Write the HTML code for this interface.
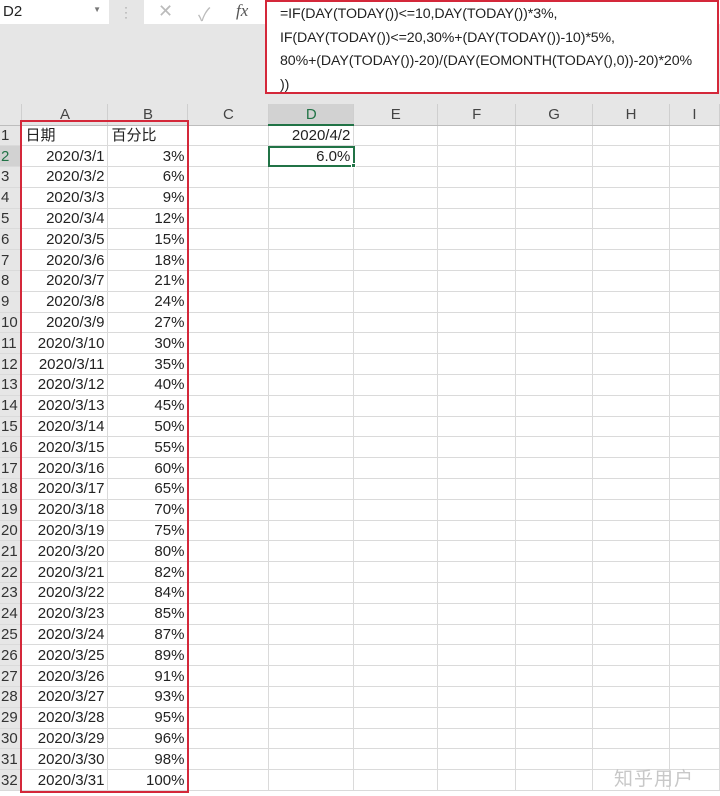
<!DOCTYPE html>
<html><head><meta charset="utf-8"><style>
*{margin:0;padding:0;box-sizing:border-box}
body{width:720px;height:796px;overflow:hidden;background:#fff;font-family:"Liberation Sans","Noto Sans CJK SC",sans-serif;color:#222;position:relative}
.top{position:absolute;left:0;top:0;width:720px;height:104px;background:#e6e6e6}
.nb{position:absolute;left:0;top:0;width:109px;height:24px;background:#fff;font-size:15px;padding:3px 0 0 3px}
.nb span{position:absolute;right:8px;top:5px;font-size:8px;color:#777}
.dots{position:absolute;left:124px;top:5px;color:#999;font-size:12px;line-height:5px}
.fbar{position:absolute;left:144px;top:0;width:576px;height:24px;background:#fff}
.ic{position:absolute;top:1px;font-size:18px;color:#bbb}
.fx{position:absolute;left:92px;top:1px;font-size:17px;font-style:italic;font-family:"Liberation Serif",serif;color:#555}
.fbox{position:absolute;left:265px;top:0;width:454px;height:94px;background:#fff;border:2px solid #d4283a;font-size:14.2px;line-height:23.5px;padding:1px 0 0 13px;color:#222;white-space:nowrap;overflow:hidden;letter-spacing:-0.1px}
table{position:absolute;left:0;top:104px;border-collapse:collapse;table-layout:fixed}
td{height:20.8px;border-right:1px solid #dadada;border-bottom:1px solid #dadada;font-size:15px;padding:0 3px;white-space:nowrap;overflow:hidden;line-height:19px}
tr.h td{height:21px;background:#e6e6e6;text-align:center;color:#444;border-right:1px solid #cfcfcf;border-bottom:1px solid #bdbdbd}
td.r{background:#e6e6e6;text-align:left;padding:0 0 0 1px;color:#333;border-right:1px solid #bdbdbd}
td.a,td.b{text-align:right}
.red{position:absolute;left:20px;top:120px;width:169px;height:673px;border:2px solid #d4283a}
.sel{position:absolute;left:268px;top:146px;width:87px;height:21px;border:2px solid #217346}
.wm{position:absolute;left:614px;top:764px;font-size:19px;color:#c8c8c8;letter-spacing:1px}
</style></head><body>
<div class="top"></div>
<div class="nb">D2<span>▼</span></div>
<div class="dots">·<br>·<br>·</div>
<div class="fbar"><span class="ic" style="left:14px">✕</span><span class="ic" style="left:54px">✓</span><span class="fx">fx</span></div>
<div class="fbox">=IF(DAY(TODAY())&lt;=10,DAY(TODAY())*3%,<br>IF(DAY(TODAY())&lt;=20,30%+(DAY(TODAY())-10)*5%,<br>80%+(DAY(TODAY())-20)/(DAY(EOMONTH(TODAY(),0))-20)*20%<br>))</div>
<table>
<colgroup><col style="width:22px"><col style="width:86px"><col style="width:80px"><col style="width:81px"><col style="width:85px"><col style="width:84px"><col style="width:78px"><col style="width:77px"><col style="width:77px"><col style="width:50px"></colgroup>
<tr class="h"><td style="background:#e6e6e6"></td><td>A</td><td>B</td><td>C</td><td style="background:#d2d2d2;color:#217346;border-bottom:2px solid #217346">D</td><td>E</td><td>F</td><td>G</td><td>H</td><td>I</td></tr>
<tr><td class="r">1</td><td>日期</td><td>百分比</td><td></td><td class="a">2020/4/2</td><td></td><td></td><td></td><td></td><td></td></tr>
<tr><td class="r" style="background:#d2d2d2;color:#217346">2</td><td class="a">2020/3/1</td><td class="b">3%</td><td></td><td class="a">6.0%</td><td></td><td></td><td></td><td></td><td></td></tr>
<tr><td class="r">3</td><td class="a">2020/3/2</td><td class="b">6%</td><td></td><td></td><td></td><td></td><td></td><td></td><td></td></tr>
<tr><td class="r">4</td><td class="a">2020/3/3</td><td class="b">9%</td><td></td><td></td><td></td><td></td><td></td><td></td><td></td></tr>
<tr><td class="r">5</td><td class="a">2020/3/4</td><td class="b">12%</td><td></td><td></td><td></td><td></td><td></td><td></td><td></td></tr>
<tr><td class="r">6</td><td class="a">2020/3/5</td><td class="b">15%</td><td></td><td></td><td></td><td></td><td></td><td></td><td></td></tr>
<tr><td class="r">7</td><td class="a">2020/3/6</td><td class="b">18%</td><td></td><td></td><td></td><td></td><td></td><td></td><td></td></tr>
<tr><td class="r">8</td><td class="a">2020/3/7</td><td class="b">21%</td><td></td><td></td><td></td><td></td><td></td><td></td><td></td></tr>
<tr><td class="r">9</td><td class="a">2020/3/8</td><td class="b">24%</td><td></td><td></td><td></td><td></td><td></td><td></td><td></td></tr>
<tr><td class="r">10</td><td class="a">2020/3/9</td><td class="b">27%</td><td></td><td></td><td></td><td></td><td></td><td></td><td></td></tr>
<tr><td class="r">11</td><td class="a">2020/3/10</td><td class="b">30%</td><td></td><td></td><td></td><td></td><td></td><td></td><td></td></tr>
<tr><td class="r">12</td><td class="a">2020/3/11</td><td class="b">35%</td><td></td><td></td><td></td><td></td><td></td><td></td><td></td></tr>
<tr><td class="r">13</td><td class="a">2020/3/12</td><td class="b">40%</td><td></td><td></td><td></td><td></td><td></td><td></td><td></td></tr>
<tr><td class="r">14</td><td class="a">2020/3/13</td><td class="b">45%</td><td></td><td></td><td></td><td></td><td></td><td></td><td></td></tr>
<tr><td class="r">15</td><td class="a">2020/3/14</td><td class="b">50%</td><td></td><td></td><td></td><td></td><td></td><td></td><td></td></tr>
<tr><td class="r">16</td><td class="a">2020/3/15</td><td class="b">55%</td><td></td><td></td><td></td><td></td><td></td><td></td><td></td></tr>
<tr><td class="r">17</td><td class="a">2020/3/16</td><td class="b">60%</td><td></td><td></td><td></td><td></td><td></td><td></td><td></td></tr>
<tr><td class="r">18</td><td class="a">2020/3/17</td><td class="b">65%</td><td></td><td></td><td></td><td></td><td></td><td></td><td></td></tr>
<tr><td class="r">19</td><td class="a">2020/3/18</td><td class="b">70%</td><td></td><td></td><td></td><td></td><td></td><td></td><td></td></tr>
<tr><td class="r">20</td><td class="a">2020/3/19</td><td class="b">75%</td><td></td><td></td><td></td><td></td><td></td><td></td><td></td></tr>
<tr><td class="r">21</td><td class="a">2020/3/20</td><td class="b">80%</td><td></td><td></td><td></td><td></td><td></td><td></td><td></td></tr>
<tr><td class="r">22</td><td class="a">2020/3/21</td><td class="b">82%</td><td></td><td></td><td></td><td></td><td></td><td></td><td></td></tr>
<tr><td class="r">23</td><td class="a">2020/3/22</td><td class="b">84%</td><td></td><td></td><td></td><td></td><td></td><td></td><td></td></tr>
<tr><td class="r">24</td><td class="a">2020/3/23</td><td class="b">85%</td><td></td><td></td><td></td><td></td><td></td><td></td><td></td></tr>
<tr><td class="r">25</td><td class="a">2020/3/24</td><td class="b">87%</td><td></td><td></td><td></td><td></td><td></td><td></td><td></td></tr>
<tr><td class="r">26</td><td class="a">2020/3/25</td><td class="b">89%</td><td></td><td></td><td></td><td></td><td></td><td></td><td></td></tr>
<tr><td class="r">27</td><td class="a">2020/3/26</td><td class="b">91%</td><td></td><td></td><td></td><td></td><td></td><td></td><td></td></tr>
<tr><td class="r">28</td><td class="a">2020/3/27</td><td class="b">93%</td><td></td><td></td><td></td><td></td><td></td><td></td><td></td></tr>
<tr><td class="r">29</td><td class="a">2020/3/28</td><td class="b">95%</td><td></td><td></td><td></td><td></td><td></td><td></td><td></td></tr>
<tr><td class="r">30</td><td class="a">2020/3/29</td><td class="b">96%</td><td></td><td></td><td></td><td></td><td></td><td></td><td></td></tr>
<tr><td class="r">31</td><td class="a">2020/3/30</td><td class="b">98%</td><td></td><td></td><td></td><td></td><td></td><td></td><td></td></tr>
<tr><td class="r">32</td><td class="a">2020/3/31</td><td class="b">100%</td><td></td><td></td><td></td><td></td><td></td><td></td><td></td></tr>
</table>
<div class="red"></div>
<div class="sel"></div>
<div style="position:absolute;left:351px;top:163px;width:5px;height:5px;background:#217346;border:1px solid #fff"></div>
<div class="wm">知乎用户</div>
</body></html>
